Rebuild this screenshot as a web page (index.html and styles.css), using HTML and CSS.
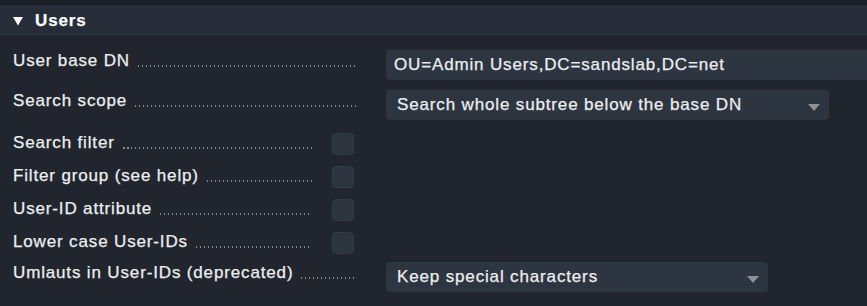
FILE: index.html
```html
<!DOCTYPE html>
<html>
<head>
<meta charset="utf-8">
<link rel="stylesheet" href="styles.css">
</head>
<body>
<div class="page">
  <div class="topstrip"></div>
  <div class="header">
    <svg class="tri" width="10" height="9" viewBox="0 0 10 9"><polygon points="0,0 10,0 5,8.5" fill="#ffffff"/></svg>
    <span class="htitle">Users</span>
  </div>
  <div class="form">
    <div class="row input-row">
      <div class="label"><span class="text">User base DN</span><span class="dots"></span></div>
      <div class="content"><div class="textinput">OU=Admin Users,DC=sandslab,DC=net</div></div>
    </div>
    <div class="row input-row">
      <div class="label"><span class="text">Search scope</span><span class="dots"></span></div>
      <div class="content"><div class="select select-wide"><span>Search whole subtree below the base DN</span><span class="arrow"></span></div></div>
    </div>
    <div class="row check-row">
      <div class="label"><span class="text">Search filter</span><span class="dots"></span><span class="checkbox"></span></div>
    </div>
    <div class="row check-row">
      <div class="label"><span class="text">Filter group (see help)</span><span class="dots"></span><span class="checkbox"></span></div>
    </div>
    <div class="row check-row">
      <div class="label"><span class="text">User-ID attribute</span><span class="dots"></span><span class="checkbox"></span></div>
    </div>
    <div class="row check-row">
      <div class="label"><span class="text">Lower case User-IDs</span><span class="dots"></span><span class="checkbox"></span></div>
    </div>
    <div class="row input-row last">
      <div class="label"><span class="text">Umlauts in User-IDs (deprecated)</span><span class="dots"></span></div>
      <div class="content"><div class="select select-mid"><span>Keep special characters</span><span class="arrow"></span></div></div>
    </div>
  </div>
</div>
</body>
</html>
```

FILE: styles.css
```css
html, body {
  margin: 0;
  padding: 0;
  background: #21262e;
}
body {
  font-family: "Liberation Sans", Arial, sans-serif;
  font-size: 17px;
  letter-spacing: 0.85px;
  color: #eeeff0;
  -webkit-text-stroke: 0.25px #eeeff0;
}
.page {
  width: 867px;
  height: 306px;
  overflow: hidden;
  background: #21262e;
}
.topstrip {
  height: 5px;
  background: #1b1f26;
}
.header {
  height: 30px;
  box-sizing: border-box;
  background: #262d38;
  border-bottom: 1px solid #2b333e;
  display: flex;
  align-items: center;
  padding-left: 13px;
  padding-top: 1px;
}
.tri {
  display: block;
  margin-top: 3px;
}
.htitle {
  font-weight: bold;
  color: #ffffff;
  margin-left: 12px;
  line-height: 19px;
}
.form {
  padding: 15px 0 0 13px;
}
.row {
  display: flex;
  align-items: flex-start;
}
.input-row {
  height: 30px;
  margin-bottom: 10px;
}
.check-row {
  height: 33px;
}
.label {
  flex: none;
  width: 344px;
  display: flex;
  align-items: flex-start;
  line-height: 19px;
  padding-top: 1px;
}
.check-row .label {
  padding-top: 3px;
}
.text {
  white-space: nowrap;
}
.dots {
  flex: 1;
  height: 1.5px;
  margin-left: 8px;
  margin-top: 14px;
  background: repeating-linear-gradient(to right, #868c94 0 1.5px, transparent 1.5px 4px);
}
.checkbox {
  width: 20px;
  height: 20px;
  margin-left: 20px;
  margin-right: 3px;
  margin-top: 0;
  border: 1px solid #323a46;
  border-radius: 4px;
  background: #2c343f;
  flex: none;
}
.content {
  flex: none;
  margin-left: 29px;
}
.textinput {
  width: 520px;
  height: 30px;
  box-sizing: border-box;
  padding-left: 8px;
  line-height: 30px;
  background: #2d3541;
  border-radius: 4px;
  white-space: nowrap;
}
.select {
  height: 30px;
  box-sizing: border-box;
  padding: 0 9px 0 11px;
  line-height: 30px;
  background: #2d3541;
  border-radius: 4px;
  display: flex;
  align-items: center;
  justify-content: space-between;
  white-space: nowrap;
}
.select-wide {
  width: 443px;
}
.select-mid {
  width: 382px;
}
.arrow {
  width: 0;
  height: 0;
  border-left: 6px solid transparent;
  border-right: 6px solid transparent;
  border-top: 7px solid #8c9097;
  margin-top: 4px;
  -webkit-text-stroke: 0;
}
```
